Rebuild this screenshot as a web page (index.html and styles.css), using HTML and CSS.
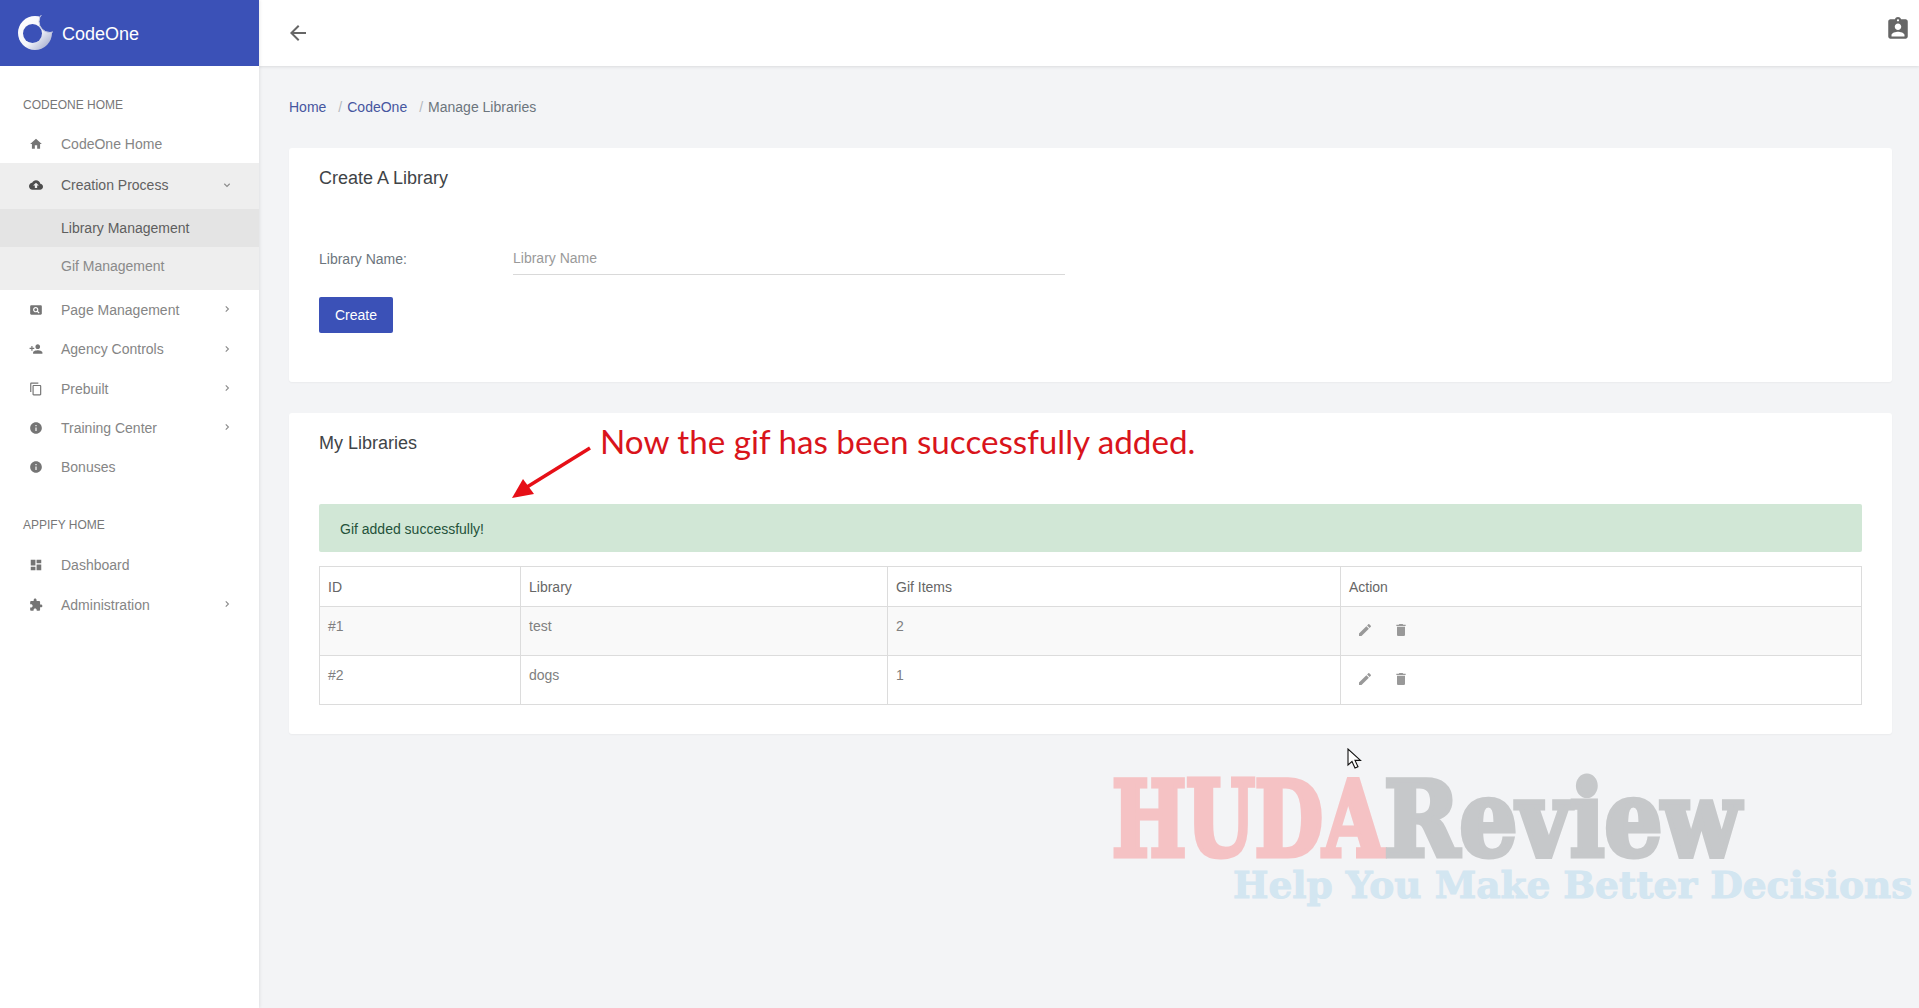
FILE: index.html
```html
<!DOCTYPE html>
<html lang="en">
<head>
  <meta charset="UTF-8">
  <title>CodeOne - Manage Libraries</title>
  <link rel="stylesheet" href="styles.css">
</head>
<body>
  <svg class="icon-defs" width="0" height="0">
    <symbol id="i-home" viewBox="0 0 24 24"><path d="M10 20v-6h4v6h5v-8h3L12 3 2 12h3v8z"/></symbol>
    <symbol id="i-cloud" viewBox="0 0 24 24"><path d="M19.35 10.04C18.67 6.59 15.64 4 12 4 9.11 4 6.6 5.64 5.35 8.04 2.34 8.36 0 10.91 0 14c0 3.31 2.69 6 6 6h13c2.76 0 5-2.24 5-5 0-2.64-2.05-4.78-4.65-4.96zM14 13v4h-4v-4H7l5-5 5 5h-3z"/></symbol>
    <symbol id="i-page" viewBox="0 0 24 24"><path d="M11.5 9C10.12 9 9 10.12 9 11.5s1.12 2.5 2.5 2.5 2.5-1.12 2.5-2.5S12.88 9 11.5 9zM20 4H4c-1.1 0-2 .9-2 2v12c0 1.1.9 2 2 2h16c1.1 0 2-.9 2-2V6c0-1.1-.9-2-2-2zm-3.21 14.21l-2.91-2.91c-.69.44-1.51.7-2.38.7C9 16 7 14 7 11.5S9 7 11.5 7 16 9 16 11.5c0 .88-.26 1.69-.7 2.39l2.91 2.9-1.42 1.42z"/></symbol>
    <symbol id="i-person" viewBox="0 0 24 24"><path d="M15 12c2.21 0 4-1.79 4-4s-1.79-4-4-4-4 1.79-4 4 1.79 4 4 4zm-9-2V7H4v3H1v2h3v3h2v-3h3v-2H6zm9 4c-2.67 0-8 1.34-8 4v2h16v-2c0-2.66-5.33-4-8-4z"/></symbol>
    <symbol id="i-copy" viewBox="0 0 24 24"><path d="M16 1H4c-1.1 0-2 .9-2 2v14h2V3h12V1zm3 4H8c-1.1 0-2 .9-2 2v14c0 1.1.9 2 2 2h11c1.1 0 2-.9 2-2V7c0-1.1-.9-2-2-2zm0 16H8V7h11v14z"/></symbol>
    <symbol id="i-info" viewBox="0 0 24 24"><path d="M12 2C6.48 2 2 6.48 2 12s4.48 10 10 10 10-4.48 10-10S17.52 2 12 2zm1 15h-2v-6h2v6zm0-8h-2V7h2v2z"/></symbol>
    <symbol id="i-dash" viewBox="0 0 24 24"><path d="M3 13h8V3H3v10zm0 8h8v-6H3v6zm10 0h8V11h-8v10zm0-18v6h8V3h-8z"/></symbol>
    <symbol id="i-ext" viewBox="0 0 24 24"><path d="M20.5 11H19V7c0-1.1-.9-2-2-2h-4V3.5C13 2.12 11.88 1 10.5 1S8 2.12 8 3.5V5H4c-1.1 0-1.99.9-1.99 2v3.8H3.5c1.49 0 2.7 1.21 2.7 2.7s-1.21 2.7-2.7 2.7H2V20c0 1.1.9 2 2 2h3.8v-1.5c0-1.49 1.21-2.7 2.7-2.7 1.49 0 2.7 1.21 2.7 2.7V22H17c1.1 0 2-.9 2-2v-4h1.5c1.38 0 2.5-1.12 2.5-2.5S21.88 11 20.5 11z"/></symbol>
    <symbol id="i-edit" viewBox="0 0 24 24"><path d="M3 17.25V21h3.75L17.81 9.94l-3.75-3.75L3 17.25zM20.71 7.04c.39-.39.39-1.02 0-1.41l-2.34-2.34c-.39-.39-1.02-.39-1.41 0l-1.83 1.83 3.75 3.75 1.83-1.83z"/></symbol>
    <symbol id="i-trash" viewBox="0 0 24 24"><path d="M6 19c0 1.1.9 2 2 2h8c1.1 0 2-.9 2-2V7H6v12zM19 4h-3.5l-1-1h-5l-1 1H5v2h14V4z"/></symbol>
    <symbol id="i-right" viewBox="0 0 24 24"><path d="M9 5.5l6.5 6.5L9 18.5" fill="none" stroke="currentColor" stroke-width="2.6"/></symbol>
    <symbol id="i-down" viewBox="0 0 24 24"><path d="M5.5 9l6.500 6.500L18.500 9" fill="none" stroke="currentColor" stroke-width="2.6"/></symbol>
  </svg>

  <aside class="sidebar">
    <div class="brand">
      <svg class="brand-logo" viewBox="0 0 36 36">
        <defs>
          <linearGradient id="logoGrad" x1="0" y1="0" x2="1" y2="1">
            <stop offset="0" stop-color="#ffffff"/>
            <stop offset="0.55" stop-color="#f4f5fa"/>
            <stop offset="0.85" stop-color="#b4bad6"/>
            <stop offset="1" stop-color="#eef0f8"/>
          </linearGradient>
        </defs>
        <circle cx="18" cy="18" r="17" fill="url(#logoGrad)"/>
        <circle cx="15.5" cy="18.5" r="9.5" fill="#3b51b7"/>
        <circle cx="33" cy="6.5" r="11" fill="#3b51b7" stroke="#c9cde3" stroke-width="1"/>
        <rect x="26" y="-1" width="11" height="7" fill="#3b51b7"/>
      </svg>
      <span class="brand-name">CodeOne</span>
    </div>

    <nav class="menu">
      <div class="menu-title">CODEONE HOME</div>
      <a class="menu-item"><svg class="menu-icon"><use href="#i-home"/></svg>CodeOne Home</a>

      <div class="menu-group">
        <a class="menu-item is-open"><svg class="menu-icon"><use href="#i-cloud"/></svg>Creation Process<svg class="menu-arrow"><use href="#i-down"/></svg></a>
        <a class="sub-item is-active">Library Management</a>
        <a class="sub-item">Gif Management</a>
      </div>

      <a class="menu-item"><svg class="menu-icon"><use href="#i-page"/></svg>Page Management<svg class="menu-arrow"><use href="#i-right"/></svg></a>
      <a class="menu-item"><svg class="menu-icon"><use href="#i-person"/></svg>Agency Controls<svg class="menu-arrow"><use href="#i-right"/></svg></a>
      <a class="menu-item"><svg class="menu-icon"><use href="#i-copy"/></svg>Prebuilt<svg class="menu-arrow"><use href="#i-right"/></svg></a>
      <a class="menu-item"><svg class="menu-icon"><use href="#i-info"/></svg>Training Center<svg class="menu-arrow"><use href="#i-right"/></svg></a>
      <a class="menu-item"><svg class="menu-icon"><use href="#i-info"/></svg>Bonuses</a>

      <div class="menu-title menu-title-second">APPIFY HOME</div>
      <a class="menu-item"><svg class="menu-icon"><use href="#i-dash"/></svg>Dashboard</a>
      <a class="menu-item"><svg class="menu-icon"><use href="#i-ext"/></svg>Administration<svg class="menu-arrow"><use href="#i-right"/></svg></a>
    </nav>
  </aside>

  <div class="page">
    <header class="topbar">
      <svg class="back-icon" viewBox="0 0 24 24"><path d="M20 11H7.83l5.59-5.59L12 4l-8 8 8 8 1.41-1.41L7.83 13H20v-2z"/></svg>
      <svg class="user-icon" viewBox="0 0 24 24"><path d="M19 3h-4.18C14.4 1.84 13.3 1 12 1s-2.4.84-2.82 2H5c-1.1 0-2 .9-2 2v14c0 1.1.9 2 2 2h14c1.1 0 2-.9 2-2V5c0-1.1-.9-2-2-2zm-7 0c.55 0 1 .45 1 1s-.45 1-1 1-1-.45-1-1 .45-1 1-1zm0 4c1.66 0 3 1.34 3 3s-1.34 3-3 3-3-1.34-3-3 1.34-3 3-3zm6 12H6v-1.4c0-2 4-3.1 6-3.1s6 1.1 6 3.1V19z"/></svg>
    </header>

    <main class="content">
      <div class="breadcrumb">
        <a>Home</a><span class="crumb-sep">/</span><a>CodeOne</a><span class="crumb-sep">/</span><span class="crumb-current">Manage Libraries</span>
      </div>

      <section class="card card-create">
        <h2 class="card-title">Create A Library</h2>
        <div class="form-row">
          <label class="form-label">Library Name:</label>
          <input class="form-input" type="text" placeholder="Library Name">
        </div>
        <button class="btn-create">Create</button>
      </section>

      <section class="card card-list">
        <h2 class="card-title">My Libraries</h2>
        <div class="alert">Gif added successfully!</div>
        <table class="lib-table">
          <thead>
            <tr><th class="col-id">ID</th><th class="col-lib">Library</th><th class="col-items">Gif Items</th><th>Action</th></tr>
          </thead>
          <tbody>
            <tr class="row-odd">
              <td>#1</td><td>test</td><td>2</td>
              <td class="cell-actions"><svg class="action-icon"><use href="#i-edit"/></svg><svg class="action-icon"><use href="#i-trash"/></svg></td>
            </tr>
            <tr>
              <td>#2</td><td>dogs</td><td>1</td>
              <td class="cell-actions"><svg class="action-icon"><use href="#i-edit"/></svg><svg class="action-icon"><use href="#i-trash"/></svg></td>
            </tr>
          </tbody>
        </table>
      </section>
    </main>
  </div>

  <!-- things pasted over the screenshot -->
  <div class="note-text">Now the gif has been successfully added.</div>
  <svg class="note-arrow" width="90" height="60" viewBox="0 0 90 60">
    <path d="M79 2L16 41" stroke="#e60f17" stroke-width="3.5" fill="none"/>
    <path d="M1 52L12 33L23 48z" fill="#e60f17"/>
  </svg>
  <svg class="cursor" width="16" height="22" viewBox="0 0 16 22">
    <path d="M1 1v16l4-3.5 3 6.5 3-1.3-3-6.3h5.5z" fill="#fff" stroke="#111" stroke-width="1.1"/>
  </svg>
  <div class="wm-main"><span class="wm-red">HUDA</span><span class="wm-grey">Review</span></div>
  <div class="wm-sub">Help You Make Better Decisions</div>
</body>
</html>
```

FILE: styles.css
```css
* {
  margin: 0;
  padding: 0;
  box-sizing: border-box;
}

html, body {
  height: 100%;
  overflow: hidden;
}

body {
  font-family: 'Liberation Sans', Arial, sans-serif;
  font-size: 14px;
  color: #6c757d;
  background: #f3f4f6;
  display: flex;
  position: relative;
}

.icon-defs {
  position: absolute;
}

/* sidebar */
.sidebar {
  width: 259px;
  flex-shrink: 0;
  background: #fff;
  box-shadow: 1px 0 3px rgba(0, 0, 0, 0.08);
  z-index: 2;
}

.brand {
  height: 66px;
  background: #3b51b7;
  display: flex;
  align-items: center;
  padding-left: 17px;
  gap: 9px;
}

.brand-logo {
  width: 36px;
  height: 36px;
}

.brand-name {
  color: #fff;
  font-size: 18px;
  padding-top: 2px;
}

.menu {
  padding-top: 30px;
}

.menu-title {
  font-size: 12px;
  color: #777;
  padding-left: 23px;
  line-height: 18px;
  margin-bottom: 10px;
}

.menu-title-second {
  margin-top: 29px;
  margin-bottom: 12px;
}

.menu-item {
  height: 39.3px;
  display: flex;
  align-items: center;
  padding-left: 29px;
  color: #858585;
}

.menu-item.is-open {
  color: #616161;
  height: 46px;
  padding-bottom: 2px;
}

.menu-group {
  background: #eeeeee;
  height: 127px;
}

.menu-icon {
  width: 14px;
  height: 14px;
  fill: #757575;
  margin-right: 18px;
  flex-shrink: 0;
}

.is-open .menu-icon {
  fill: #4d4d4d;
}

.menu-arrow {
  width: 10px;
  height: 10px;
  margin-left: auto;
  margin-right: 27px;
  margin-top: -1px;
  color: #8a8a8a;
}

.sub-item {
  display: flex;
  align-items: center;
  height: 38px;
  padding-left: 61px;
  color: #8a8a8a;
}

.sub-item.is-active {
  background: #e4e4e4;
  color: #5e5e5e;
}

/* right side */
.page {
  flex: 1;
  display: flex;
  flex-direction: column;
  min-width: 0;
}

.topbar {
  height: 66px;
  background: #fff;
  box-shadow: 0 1px 3px rgba(0, 0, 0, 0.1);
  display: flex;
  align-items: center;
  justify-content: space-between;
  padding: 0 8px 0 27px;
}

.back-icon {
  width: 24px;
  height: 24px;
  fill: #666;
}

.user-icon {
  width: 26px;
  height: 26px;
  fill: #666;
  margin-bottom: 8px;
}

.content {
  padding: 32px 27px 0 30px;
}

.breadcrumb {
  line-height: 18px;
  margin-bottom: 32px;
  color: #6c757d;
}

.breadcrumb a {
  color: #46569f;
}

.crumb-sep {
  color: #b5b9be;
  margin: 0 5px 0 12px;
}

.card {
  background: #fff;
  border-radius: 3px;
  box-shadow: 0 1px 2px rgba(0, 0, 0, 0.04);
  padding: 0 30px;
}

.card-create {
  height: 234px;
  margin-bottom: 31px;
}

.card-list {
  height: 321px;
}

.card-title {
  font-size: 18px;
  font-weight: 400;
  color: #3f4447;
  line-height: 22px;
  padding-top: 19px;
  height: 58px;
}

.form-row {
  display: flex;
  align-items: center;
  margin-top: 36px;
  height: 33px;
}

.form-label {
  width: 194px;
  color: #6c757d;
}

.form-input {
  width: 552px;
  height: 33px;
  border: none;
  border-bottom: 1px solid #d9d9d9;
  font: inherit;
  color: #6c757d;
  background: transparent;
  outline: none;
}

.form-input::placeholder {
  color: #9a9a9a;
  opacity: 1;
}

.btn-create {
  display: block;
  width: 74px;
  height: 36px;
  margin-top: 22px;
  background: #3b51b7;
  color: #fff;
  border: none;
  border-radius: 2px;
  font: inherit;
}

.alert {
  height: 48px;
  margin-top: 33px;
  padding: 1px 0 0 21px;
  background: #d1e7d6;
  color: #24523a;
  border-radius: 2px;
  display: flex;
  align-items: center;
}

.lib-table {
  width: 100%;
  margin-top: 14px;
  border-collapse: collapse;
  table-layout: fixed;
}

.lib-table th, .lib-table td {
  border: 1px solid #dcdcdc;
  text-align: left;
  font-weight: 400;
  padding: 0 8px;
  vertical-align: top;
}

.lib-table th {
  height: 39px;
  padding-top: 1px;
  line-height: 38px;
  color: #666;
}

.lib-table td {
  height: 49px;
  padding-top: 11px;
  color: #808080;
}

.col-id {
  width: 201px;
}

.col-lib {
  width: 367px;
}

.col-items {
  width: 453px;
}

.row-odd td {
  background: #f9f9f9;
}

.lib-table td.cell-actions {
  padding: 0 0 3px 16px;
  vertical-align: middle;
}

.action-icon {
  display: inline-block;
  width: 16px;
  height: 16px;
  fill: #999;
  margin-right: 20px;
  vertical-align: middle;
}

/* overlays */
.note-text {
  position: absolute;
  left: 600px;
  top: 419px;
  font-family: Lato, sans-serif;
  font-size: 33.2px;
  line-height: 44px;
  color: #d9141b;
  white-space: nowrap;
}

.note-arrow {
  position: absolute;
  left: 511px;
  top: 446px;
}

.cursor {
  position: absolute;
  left: 1347px;
  top: 748px;
}

.wm-main {
  position: absolute;
  left: 1112px;
  top: 778px;
  font-family: 'DejaVu Serif Condensed', 'DejaVu Serif', serif;
  font-weight: 700;
  font-size: 104px;
  line-height: 84px;
  white-space: nowrap;
  -webkit-text-stroke: 5px;
}

.wm-red {
  display: inline-block;
  color: #f5c2c4;
  transform: scaleX(0.84);
  transform-origin: left;
  margin-right: -52px;
}

.wm-grey {
  display: inline-block;
  color: #c6c8ca;
  transform: scaleX(0.97);
  transform-origin: left;
}

.wm-sub {
  position: absolute;
  left: 1233px;
  top: 865px;
  font-family: 'DejaVu Serif', serif;
  font-weight: 700;
  font-size: 37.5px;
  line-height: 40px;
  color: #d3e6f1;
  white-space: nowrap;
  -webkit-text-stroke: 1px;
}
```
